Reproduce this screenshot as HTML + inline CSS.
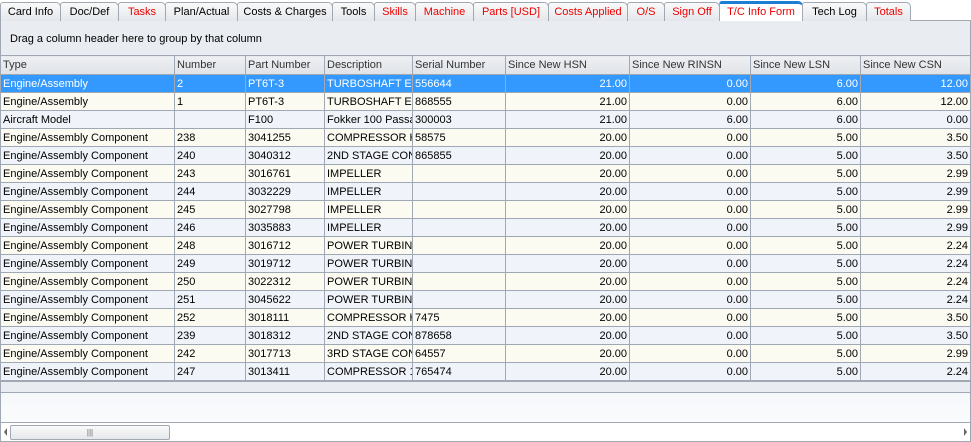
<!DOCTYPE html>
<html><head><meta charset="utf-8"><style>
*{margin:0;padding:0;box-sizing:border-box}
body{width:971px;height:442px;background:#fff;font-family:"Liberation Sans",sans-serif;font-size:11px;overflow:hidden;position:relative}
.tabs{position:absolute;left:0;top:0;width:971px;height:21px;background:#fff;border-bottom:1px solid #a0a8b4}
.tab{position:absolute;top:2px;height:19px;border:1px solid #a0a8b4;border-bottom:none;border-radius:3px 5px 0 0;background:linear-gradient(#fafafa,#e4e7ec);text-align:center;line-height:18px;font-size:11px;color:#000}
.tab.r{color:#e00}
.tab.act{top:1px;height:21px;background:#fff;border-top:3px solid #1a7fd4;line-height:16px}
.grp{position:absolute;left:0;top:21px;width:971px;height:35px;background:#e9ecf1;border-left:1px solid #a0a8b4;border-right:1px solid #a0a8b4}
.grp span{position:absolute;left:9px;top:12px;font-size:11px}
table{position:absolute;left:0;top:55px;border-collapse:collapse;table-layout:fixed;width:970px}
td,th{border:1px solid #a0a8b4;height:18px;padding:0 2px;white-space:nowrap;overflow:hidden;font-weight:normal;font-size:11px;text-align:left}
th{background:linear-gradient(#eef0f3,#dfe2e7);color:#333;height:19px}
td.n{text-align:right}
tr.c td{background:#fcfbf2}
tr.b td{background:#f0f4fa}
tr.s td{background:#3399ff;color:#fff;border-top:1px dotted #c87a2a;border-bottom:1px dotted #c87a2a}
.foot{position:absolute;left:0;top:381px;width:971px;height:12px;background:#e9ecf1;border:1px solid #a0a8b4}
.empty{position:absolute;left:0;top:393px;width:971px;height:49px;background:linear-gradient(#f5f7fa,#fff);border-left:1px solid #a0a8b4;border-right:1px solid #a0a8b4}
.sb{position:absolute;left:0;top:422px;width:971px;height:20px;background:#fff;border:1px solid #a0a8b4}
.th{position:absolute;left:9px;top:2px;width:160px;height:15px;border:1px solid #a0a8b4;border-radius:2px;background:linear-gradient(#f9f9f9,#e6e8ec);text-align:center;font-size:8px;line-height:13px;color:#666}
.al,.ar{position:absolute;top:5px;width:0;height:0;border-top:4px solid transparent;border-bottom:4px solid transparent}
.al{left:3px;border-right:3px solid #666}
.ar{right:3px;border-left:3px solid #666}
</style></head><body>
<div class="tabs">
<div class="tab" style="left:0;width:61px">Card Info</div>
<div class="tab" style="left:60px;width:59px">Doc/Def</div>
<div class="tab r" style="left:118px;width:48px">Tasks</div>
<div class="tab" style="left:165px;width:73px">Plan/Actual</div>
<div class="tab" style="left:237px;width:96px">Costs &amp; Charges</div>
<div class="tab" style="left:332px;width:43px">Tools</div>
<div class="tab r" style="left:374px;width:42px">Skills</div>
<div class="tab r" style="left:415px;width:59px">Machine</div>
<div class="tab r" style="left:473px;width:76px">Parts [USD]</div>
<div class="tab r" style="left:548px;width:80px">Costs Applied</div>
<div class="tab r" style="left:627px;width:38px">O/S</div>
<div class="tab r" style="left:664px;width:56px">Sign Off</div>
<div class="tab r act" style="left:719px;width:84px">T/C Info Form</div>
<div class="tab" style="left:802px;width:65px">Tech Log</div>
<div class="tab r" style="left:866px;width:45px">Totals</div>
</div>
<div class="grp"><span>Drag a column header here to group by that column</span></div>
<table>
<colgroup><col style="width:174px"><col style="width:71px"><col style="width:79px"><col style="width:88px"><col style="width:93px"><col style="width:124px"><col style="width:121px"><col style="width:110px"><col style="width:110px"></colgroup>
<tr><th>Type</th><th>Number</th><th>Part Number</th><th>Description</th><th>Serial Number</th><th>Since New HSN</th><th>Since New RINSN</th><th>Since New LSN</th><th>Since New CSN</th></tr>
<tr class="s"><td>Engine/Assembly</td><td>2</td><td>PT6T-3</td><td>TURBOSHAFT E</td><td>556644</td><td class="n">21.00</td><td class="n">0.00</td><td class="n">6.00</td><td class="n">12.00</td></tr>
<tr class="c"><td>Engine/Assembly</td><td>1</td><td>PT6T-3</td><td>TURBOSHAFT E</td><td>868555</td><td class="n">21.00</td><td class="n">0.00</td><td class="n">6.00</td><td class="n">12.00</td></tr>
<tr class="b"><td>Aircraft Model</td><td></td><td>F100</td><td>Fokker 100 Passa</td><td>300003</td><td class="n">21.00</td><td class="n">6.00</td><td class="n">6.00</td><td class="n">0.00</td></tr>
<tr class="c"><td>Engine/Assembly Component</td><td>238</td><td>3041255</td><td>COMPRESSOR H</td><td>58575</td><td class="n">20.00</td><td class="n">0.00</td><td class="n">5.00</td><td class="n">3.50</td></tr>
<tr class="b"><td>Engine/Assembly Component</td><td>240</td><td>3040312</td><td>2ND STAGE CON</td><td>865855</td><td class="n">20.00</td><td class="n">0.00</td><td class="n">5.00</td><td class="n">3.50</td></tr>
<tr class="c"><td>Engine/Assembly Component</td><td>243</td><td>3016761</td><td>IMPELLER</td><td></td><td class="n">20.00</td><td class="n">0.00</td><td class="n">5.00</td><td class="n">2.99</td></tr>
<tr class="b"><td>Engine/Assembly Component</td><td>244</td><td>3032229</td><td>IMPELLER</td><td></td><td class="n">20.00</td><td class="n">0.00</td><td class="n">5.00</td><td class="n">2.99</td></tr>
<tr class="c"><td>Engine/Assembly Component</td><td>245</td><td>3027798</td><td>IMPELLER</td><td></td><td class="n">20.00</td><td class="n">0.00</td><td class="n">5.00</td><td class="n">2.99</td></tr>
<tr class="b"><td>Engine/Assembly Component</td><td>246</td><td>3035883</td><td>IMPELLER</td><td></td><td class="n">20.00</td><td class="n">0.00</td><td class="n">5.00</td><td class="n">2.99</td></tr>
<tr class="c"><td>Engine/Assembly Component</td><td>248</td><td>3016712</td><td>POWER TURBIN</td><td></td><td class="n">20.00</td><td class="n">0.00</td><td class="n">5.00</td><td class="n">2.24</td></tr>
<tr class="b"><td>Engine/Assembly Component</td><td>249</td><td>3019712</td><td>POWER TURBIN</td><td></td><td class="n">20.00</td><td class="n">0.00</td><td class="n">5.00</td><td class="n">2.24</td></tr>
<tr class="c"><td>Engine/Assembly Component</td><td>250</td><td>3022312</td><td>POWER TURBIN</td><td></td><td class="n">20.00</td><td class="n">0.00</td><td class="n">5.00</td><td class="n">2.24</td></tr>
<tr class="b"><td>Engine/Assembly Component</td><td>251</td><td>3045622</td><td>POWER TURBIN</td><td></td><td class="n">20.00</td><td class="n">0.00</td><td class="n">5.00</td><td class="n">2.24</td></tr>
<tr class="c"><td>Engine/Assembly Component</td><td>252</td><td>3018111</td><td>COMPRESSOR H</td><td>7475</td><td class="n">20.00</td><td class="n">0.00</td><td class="n">5.00</td><td class="n">3.50</td></tr>
<tr class="b"><td>Engine/Assembly Component</td><td>239</td><td>3018312</td><td>2ND STAGE CON</td><td>878658</td><td class="n">20.00</td><td class="n">0.00</td><td class="n">5.00</td><td class="n">3.50</td></tr>
<tr class="c"><td>Engine/Assembly Component</td><td>242</td><td>3017713</td><td>3RD STAGE CON</td><td>64557</td><td class="n">20.00</td><td class="n">0.00</td><td class="n">5.00</td><td class="n">2.99</td></tr>
<tr class="b"><td>Engine/Assembly Component</td><td>247</td><td>3013411</td><td>COMPRESSOR 1</td><td>765474</td><td class="n">20.00</td><td class="n">0.00</td><td class="n">5.00</td><td class="n">2.24</td></tr>
</table>
<div class="foot"></div>
<div class="empty"></div>
<div class="sb"><div class="al"></div><div class="th">|||</div><div class="ar"></div></div>
</body></html>
